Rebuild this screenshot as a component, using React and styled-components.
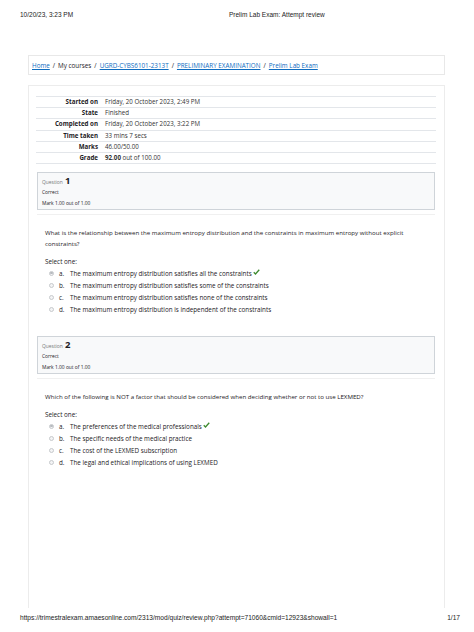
import styled, { createGlobalStyle } from "styled-components";

const GlobalStyle = createGlobalStyle`
  html, body {
    margin: 0;
    padding: 0;
    background: #ffffff;
  }
  body {
    font-family: "Open Sans", "Liberation Sans", sans-serif;
    color: #1d2125;
  }
`;

const Page = styled.div`
  width: 474px;
  height: 632px;
  display: flex;
  flex-direction: column;
  overflow: hidden;
`;

const PrintHeader = styled.header`
  display: grid;
  grid-template-columns: 209px 1fr;
  padding: 11px 20px 0;
  height: 8px;
  font-family: "Liberation Sans", Arial, sans-serif;
  font-size: 6.5px;
  line-height: 8px;
  color: #222;
`;

const Breadcrumb = styled.nav`
  margin: 36px 29px 0 28px;
  height: 20px;
  box-sizing: border-box;
  border: 1px solid #e8e8e8;
  display: flex;
  align-items: center;
  padding-left: 3px;
  font-size: 6.3px;
  color: #1d2125;
`;

const Crumb = styled.a`
  color: #0f6cbf;
  text-decoration: underline;
`;

const Sep = styled.span`
  margin: 0 3px;
`;

const Card = styled.main`
  flex: 1;
  margin: 10px 29px 0 28px;
  border: 1px solid #ececec;
  border-bottom: none;
  padding: 10px 8px 0 7px;
`;

const Summary = styled.table`
  width: 100%;
  border-collapse: collapse;
  font-size: 6.2px;
  border-bottom: 1px solid #e3e6ea;
`;

const Row = styled.tr`
  height: 11.2px;
  border-top: 1px solid #e3e6ea;
`;

const Label = styled.th`
  width: 62px;
  padding: 0 7px 0 0;
  text-align: right;
  font-weight: 700;
  line-height: 10px;
`;

const Value = styled.td`
  padding: 0;
  line-height: 10px;
  color: #333;
`;

const Question = styled.section`
  margin: ${(p) => (p.$first ? "8px 1px 0" : "21px 1px 0")};
`;

const Info = styled.div`
  height: 38px;
  box-sizing: border-box;
  background: #f8f9fa;
  border: 1px solid #cfd4d9;
  padding: 3px 4px 0;
  font-size: 4.9px;
  line-height: 10.5px;
  color: #1d2125;
`;

const QNo = styled.div`
  color: #777;
  font-size: 4.9px;
  line-height: 10px;
  strong {
    color: #1d2125;
    font-size: 9.5px;
    font-weight: 700;
    margin-left: 1px;
  }
`;

const Content = styled.div`
  margin-top: 4px;
  border-top: 1px solid #f0f0f0;
  padding: 12px 8px 0;
  font-size: 6.3px;
`;

const Prompt = styled.p`
  margin: 0 0 7px;
  font-size: 6.15px;
  line-height: 11px;
`;

const SelectOne = styled.div`
  line-height: 11px;
`;

const Options = styled.div`
  padding-left: 4px;
`;

const Option = styled.div`
  display: flex;
  align-items: center;
  height: 12px;
`;

const Radio = styled.span`
  flex-shrink: 0;
  width: 5px;
  height: 5px;
  border-radius: 50%;
  border: 0.6px solid #c6c9cc;
  background: #f3f4f5;
  box-sizing: border-box;
  display: flex;
  align-items: center;
  justify-content: center;
  margin-right: 5px;
  &::after {
    content: "";
    width: 2.4px;
    height: 2.4px;
    border-radius: 50%;
    background: ${(p) => (p.$checked ? "#b6babe" : "transparent")};
  }
`;

const Letter = styled.span`
  flex-shrink: 0;
  width: 11px;
`;

const Check = () => (
  <svg width="7" height="6" viewBox="0 0 14 12" style={{ marginLeft: 1, marginTop: -3 }}>
    <path d="M1.5 6.5 L5 10 L12.5 1.5" fill="none" stroke="#3c8a2e" strokeWidth="2.6" />
  </svg>
);

const Footer = styled.footer`
  display: flex;
  justify-content: space-between;
  padding: 0 14px 10px 20px;
  height: 8px;
  font-family: "Liberation Sans", Arial, sans-serif;
  font-size: 6.6px;
  line-height: 8px;
  color: #222;
  margin-top: 6px;
`;

const summary = [
  ["Started on", "Friday, 20 October 2023, 2:49 PM"],
  ["State", "Finished"],
  ["Completed on", "Friday, 20 October 2023, 3:22 PM"],
  ["Time taken", "33 mins 7 secs"],
  ["Marks", "46.00/50.00"],
  [
    "Grade",
    <>
      <b>92.00</b> out of 100.00
    </>,
  ],
];

const questions = [
  {
    no: 1,
    text: "What is the relationship between the maximum entropy distribution and the constraints in maximum entropy without explicit constraints?",
    options: [
      "The maximum entropy distribution satisfies all the constraints",
      "The maximum entropy distribution satisfies some of the constraints",
      "The maximum entropy distribution satisfies none of the constraints",
      "The maximum entropy distribution is independent of the constraints",
    ],
  },
  {
    no: 2,
    text: "Which of the following is NOT a factor that should be considered when deciding whether or not to use LEXMED?",
    options: [
      "The preferences of the medical professionals",
      "The specific needs of the medical practice",
      "The cost of the LEXMED subscription",
      "The legal and ethical implications of using LEXMED",
    ],
  },
];

const App = () => {
  return (
    <Page>
      <GlobalStyle />
      <PrintHeader>
        <span>10/20/23, 3:23 PM</span>
        <span>Prelim Lab Exam: Attempt review</span>
      </PrintHeader>

      <Breadcrumb>
        <Crumb>Home</Crumb>
        <Sep>/</Sep>
        <span>My courses</span>
        <Sep>/</Sep>
        <Crumb>UGRD-CYBS6101-2313T</Crumb>
        <Sep>/</Sep>
        <Crumb>PRELIMINARY EXAMINATION</Crumb>
        <Sep>/</Sep>
        <Crumb>Prelim Lab Exam</Crumb>
      </Breadcrumb>

      <Card>
        <Summary>
          <tbody>
            {summary.map(([k, v]) => (
              <Row key={k}>
                <Label>{k}</Label>
                <Value>{v}</Value>
              </Row>
            ))}
          </tbody>
        </Summary>

        {questions.map((q, qi) => (
          <Question key={q.no} $first={qi === 0}>
            <Info>
              <QNo>
                Question <strong>{q.no}</strong>
              </QNo>
              <div>Correct</div>
              <div>Mark 1.00 out of 1.00</div>
            </Info>
            <Content>
              <Prompt>{q.text}</Prompt>
              <SelectOne>Select one:</SelectOne>
              <Options>
                {q.options.map((o, i) => (
                  <Option key={o}>
                    <Radio $checked={i === 0} />
                    <Letter>{"abcd"[i]}.</Letter>
                    <span>{o}</span>
                    {i === 0 && <Check />}
                  </Option>
                ))}
              </Options>
            </Content>
          </Question>
        ))}
      </Card>

      <Footer>
        <span>
          https://trimestralexam.amaesonline.com/2313/mod/quiz/review.php?attempt=71060&amp;cmid=12923&amp;showall=1
        </span>
        <span>1/17</span>
      </Footer>
    </Page>
  );
};

export default App;
